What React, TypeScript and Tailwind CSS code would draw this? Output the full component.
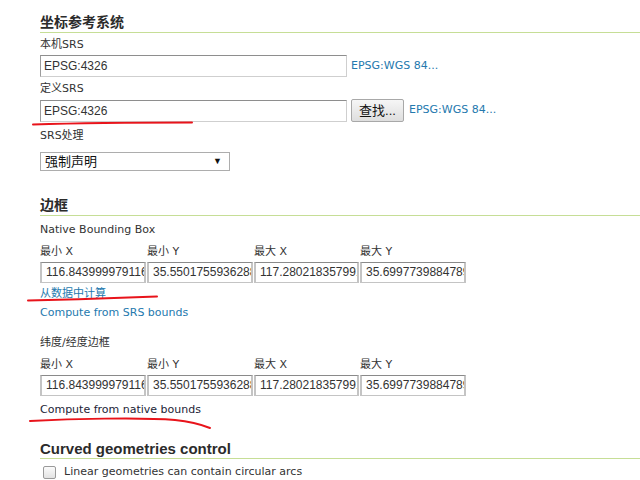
import React from "react";

const body = "font-['DejaVu_Sans','Noto_Sans_CJK_SC',sans-serif]";
const field = "font-['Liberation_Sans','Noto_Sans_CJK_SC',sans-serif]";

const Title = ({ children, mt, size }: { children: React.ReactNode; mt: string; size: string }) => (
  <div
    className={`${mt} h-[20px] leading-[19px] ${size} font-bold text-[#2b2b2b] border-b border-[#c6de96] font-['Liberation_Sans','Noto_Sans_CJK_SC',sans-serif]`}
  >
    {children}
  </div>
);

const Label = ({ children, mt }: { children: React.ReactNode; mt: string }) => (
  <div className={`${mt} h-[16px] leading-[16px] text-[11px] text-[#333] ${body}`}>{children}</div>
);

const BoxInputs = ({ values }: { values: string[] }) => {
  const labels = ["最小 X", "最小 Y", "最大 X", "最大 Y"];
  return (
    <div className="grid grid-cols-[106px_106px_105px_106px] gap-x-[1px]">
      {labels.map((l) => (
        <div key={l} className={`mt-[6px] h-[16px] leading-[16px] text-[11px] text-[#333] ${body}`}>
          {l}
        </div>
      ))}
      {values.map((v, i) => (
        <div
          key={i}
          className={`mt-[2px] h-[21px] border border-[#c4c4c4] border-t-[#8a8a8a] border-x-2 px-[4px] overflow-hidden whitespace-nowrap leading-[19px] text-[12px] text-[#333] ${field}`}
        >
          {v}
        </div>
      ))}
    </div>
  );
};

const Link = ({ children, mt, color = "text-[#2479ae]" }: { children: React.ReactNode; mt: string; color?: string }) => (
  <div className={`${mt} h-[16px] leading-[16px] text-[11px] ${color} ${body}`}>{children}</div>
);

const SrsInput = ({ value }: { value: string }) => (
  <div
    className={`w-[307px] h-[22px] border border-[#cfcfcf] border-t-[#8e8e8e] border-l-[#9c9c9c] px-[3px] leading-[20px] text-[12px] text-[#333] ${field}`}
  >
    {value}
  </div>
);

export default function App() {
  const native = ["116.843999979116", "35.5501755936288", "117.280218357991", "35.6997739884789"];
  return (
    <div className="relative w-[640px] h-[480px] overflow-hidden bg-white pl-[40px]">
      <Title mt="mt-[13px]" size="text-[14px]">坐标参考系统</Title>
      <Label mt="mt-[4px]">本机SRS</Label>
      <div className="mt-[2px] flex items-center gap-[4px]">
        <SrsInput value="EPSG:4326" />
        <span className={`text-[11px] text-[#2479ae] ${body}`}>EPSG:WGS 84...</span>
      </div>
      <Label mt="mt-[4px]">定义SRS</Label>
      <div className="mt-[2px] flex items-center">
        <SrsInput value="EPSG:4326" />
        <button
          className={`ml-[4px] w-[53px] h-[23px] rounded-[2px] border border-[#a8a8a8] bg-gradient-to-b from-[#f6f6f6] to-[#dedede] text-[13px] text-[#111] ${field}`}
        >
          查找...
        </button>
        <span className={`ml-[5px] text-[11px] text-[#2479ae] ${body}`}>EPSG:WGS 84...</span>
      </div>
      <Label mt="mt-[6px]">SRS处理</Label>
      <div
        className={`mt-[8px] w-[190px] h-[19px] border border-[#adadad] flex items-center justify-between pl-[4px] pr-[7px] text-[13px] text-[#111] ${field}`}
      >
        <span className="leading-[17px]">强制声明</span>
        <span className="text-[9px]">▼</span>
      </div>

      <Title mt="mt-[25px]" size="text-[14px]">边框</Title>
      <Label mt="mt-[6px]">Native Bounding Box</Label>
      <BoxInputs values={native} />
      <Link mt="mt-[3px]">从数据中计算</Link>
      <Link mt="mt-[3px]">Compute from SRS bounds</Link>

      <Label mt="mt-[14px]">纬度/经度边框</Label>
      <BoxInputs values={native} />
      <Link mt="mt-[6px]" color="text-[#1c2436]">Compute from native bounds</Link>

      <Title mt="mt-[21px]" size="text-[15px]">Curved geometries control</Title>
      <div className="mt-[5px] flex items-center h-[16px]">
        <span className="ml-[3px] w-[13px] h-[13px] rounded-[2px] border border-[#9a9a9a] bg-gradient-to-b from-[#fbfbfb] to-[#e3e3e3]" />
        <span className={`ml-[8px] text-[11px] text-[#333] ${body}`}>Linear geometries can contain circular arcs</span>
      </div>

      <svg className="absolute left-0 top-0 pointer-events-none" width="640" height="480" viewBox="0 0 640 480">
        <path d="M33 124.5 C 80 123, 150 122.5, 192 122.5" stroke="#e8141b" strokeWidth="2" fill="none" strokeLinecap="round" />
        <path d="M28 300.5 C 70 299.5, 120 298, 157 296.5" stroke="#e8141b" strokeWidth="2" fill="none" strokeLinecap="round" />
        <path d="M30 421 C 70 419, 140 417, 175 420 C 195 422, 205 426, 210 428" stroke="#e8141b" strokeWidth="2" fill="none" strokeLinecap="round" />
      </svg>
    </div>
  );
}
